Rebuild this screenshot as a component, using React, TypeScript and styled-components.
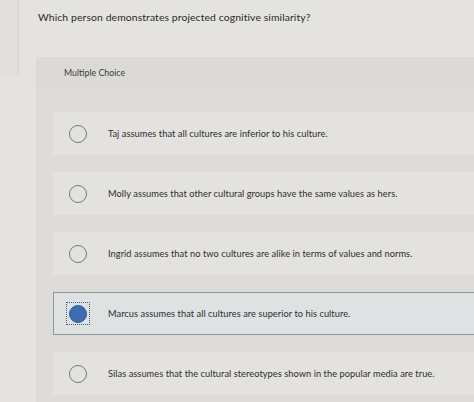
import React from "react";
import styled, { createGlobalStyle } from "styled-components";

const Global = createGlobalStyle`
  html, body { margin: 0; padding: 0; }
  body { background: #e4e3df; font-family: Lato, "Liberation Sans", sans-serif; }
`;

const Page = styled.div`
  position: relative;
  width: 474px;
  height: 402px;
  overflow: hidden;
  background: #e4e3df;
`;

const Rail = styled.div`
  position: absolute;
  left: 0;
  top: 0;
  width: 18px;
  height: 75px;
  border-right: 1px solid #d6d5d1;
  background: #e1e0dc;
`;

const Question = styled.h1`
  margin: 0;
  padding: 9px 0 0 38px;
  font-size: 10.4px;
  line-height: 16px;
  font-weight: 400;
  letter-spacing: 0.1px;
  color: #2a2a2a;
`;

const Panel = styled.section`
  margin: 32px 0 0 36px;
  background: #dddcd8;
  height: 400px;
`;

const PanelHeader = styled.div`
  height: 31px;
  display: flex;
  align-items: center;
  padding-left: 28px;
  font-size: 8.8px;
  color: #3b3b3b;
  background: #dbdad6;
`;

const Options = styled.div`
  display: flex;
  flex-direction: column;
  gap: 17px;
  padding: 24px 0 0 17px;
`;

const Row = styled.div<{ $selected?: boolean }>`
  height: ${(p) => (p.$selected ? 41 : 43)}px;
  display: flex;
  align-items: center;
  padding-left: ${(p) => (p.$selected ? 15 : 16)}px;
  background: ${(p) => (p.$selected ? "#dfe2e3" : "#e3e2de")};
  border: ${(p) => (p.$selected ? "1px solid #8d979f" : "none")};
  border-right: none;
`;

const RadioWrap = styled.div<{ $selected?: boolean }>`
  width: 24px;
  height: 23px;
  margin-left: -3px;
  display: flex;
  align-items: center;
  justify-content: center;
  border: 1px dotted ${(p) => (p.$selected ? "#4a5a72" : "transparent")};
  box-sizing: border-box;
  flex-shrink: 0;
`;

const Radio = styled.span<{ $selected?: boolean }>`
  width: 18px;
  height: 18px;
  border-radius: 50%;
  box-sizing: border-box;
  border: 1px solid ${(p) => (p.$selected ? "#2f5d9c" : "#7a7a7a")};
  background: ${(p) => (p.$selected ? "#3d6cb0" : "transparent")};
`;

const Label = styled.span`
  margin-left: 18px;
  font-size: 9.25px;
  letter-spacing: 0.05px;
  color: #2e2e2e;
  white-space: nowrap;
`;

const options = [
  "Taj assumes that all cultures are inferior to his culture.",
  "Molly assumes that other cultural groups have the same values as hers.",
  "Ingrid assumes that no two cultures are alike in terms of values and norms.",
  "Marcus assumes that all cultures are superior to his culture.",
  "Silas assumes that the cultural stereotypes shown in the popular media are true.",
];

export default function App() {
  return (
    <Page>
      <Global />
      <Rail />
      <Question>Which person demonstrates projected cognitive similarity?</Question>
      <Panel>
        <PanelHeader>Multiple Choice</PanelHeader>
        <Options>
          {options.map((o, i) => {
            const sel = i === 3;
            return (
              <Row key={i} $selected={sel}>
                <RadioWrap $selected={sel}>
                  <Radio $selected={sel} />
                </RadioWrap>
                <Label>{o}</Label>
              </Row>
            );
          })}
        </Options>
      </Panel>
    </Page>
  );
}
